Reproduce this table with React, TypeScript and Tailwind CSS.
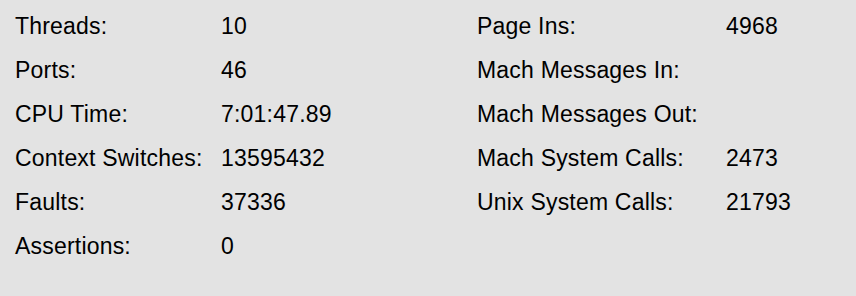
import React from "react";

const left: [string, string][] = [
  ["Threads:", "10"],
  ["Ports:", "46"],
  ["CPU Time:", "7:01:47.89"],
  ["Context Switches:", "13595432"],
  ["Faults:", "37336"],
  ["Assertions:", "0"],
];

const right: [string, string][] = [
  ["Page Ins:", "4968"],
  ["Mach Messages In:", ""],
  ["Mach Messages Out:", ""],
  ["Mach System Calls:", "2473"],
  ["Unix System Calls:", "21793"],
];

const StatColumn: React.FC<{ rows: [string, string][]; labelWidth: string }> = ({
  rows,
  labelWidth,
}) => (
  <div className="flex flex-col">
    {rows.map(([label, value]) => (
      <div key={label} className="flex h-[44px] items-center">
        <span className={`${labelWidth} shrink-0`}>{label}</span>
        <span>{value}</span>
      </div>
    ))}
  </div>
);

const App: React.FC = () => {
  return (
    <div
      className="flex h-[296px] w-[856px] bg-[#e3e3e3] pl-[15px] pt-[4px] text-[23px] leading-[44px] tracking-[0.2px] text-black"
      style={{ fontFamily: '"Liberation Sans", Arial, sans-serif' }}
    >
      <div className="w-[462px]">
        <StatColumn rows={left} labelWidth="w-[206px]" />
      </div>
      <StatColumn rows={right} labelWidth="w-[249px]" />
    </div>
  );
};

export default App;
